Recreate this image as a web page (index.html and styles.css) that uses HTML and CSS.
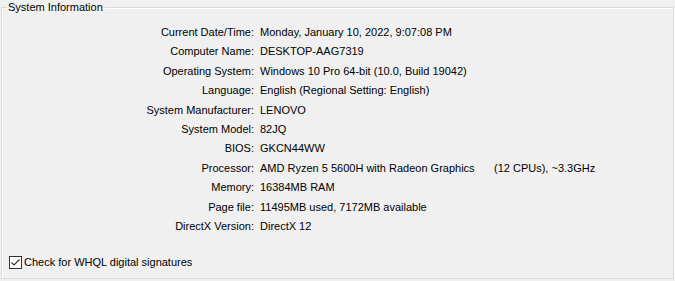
FILE: index.html
```html
<!DOCTYPE html>
<html lang="en">
<head>
  <meta charset="UTF-8">
  <title>System Information</title>
  <link rel="stylesheet" href="styles.css">
</head>
<body>
  <fieldset class="group">
    <legend>System Information</legend>
    <div class="info">
      <span class="label">Current Date/Time:</span><span class="value">Monday, January 10, 2022, 9:07:08 PM</span>
      <span class="label">Computer Name:</span><span class="value">DESKTOP-AAG7319</span>
      <span class="label">Operating System:</span><span class="value">Windows 10 Pro 64-bit (10.0, Build 19042)</span>
      <span class="label">Language:</span><span class="value">English (Regional Setting: English)</span>
      <span class="label">System Manufacturer:</span><span class="value">LENOVO</span>
      <span class="label">System Model:</span><span class="value">82JQ</span>
      <span class="label">BIOS:</span><span class="value">GKCN44WW</span>
      <span class="label">Processor:</span><span class="value"><span class="cpu-name">AMD Ryzen 5 5600H with Radeon Graphics</span>(12 CPUs), ~3.3GHz</span>
      <span class="label">Memory:</span><span class="value">16384MB RAM</span>
      <span class="label">Page file:</span><span class="value">11495MB used, 7172MB available</span>
      <span class="label">DirectX Version:</span><span class="value">DirectX 12</span>
    </div>

    <label class="check">
      <svg class="box" width="13" height="13" viewBox="0 0 13 13">
        <rect x="0.5" y="0.5" width="12" height="12" fill="#fff" stroke="#333"/>
        <path d="M2.5 6.5 L5 9 L10.5 3.5" fill="none" stroke="#333" stroke-width="1.2"/>
      </svg>
      Check for WHQL digital signatures
    </label>
  </fieldset>
</body>
</html>
```

FILE: styles.css
```css
body {
  margin: 0;
  background-color: #f0f0f0;
  font-family: "Liberation Sans", Arial, sans-serif;
  font-size: 11px;
  color: #000000;
}

.group {
  margin: 0 0 0 1px;
  padding: 0;
  width: 673px;
  height: 279px;
  box-sizing: border-box;
  border: 1px solid #dcdcdc;
  box-shadow: 1px 1px 0 #ffffff, inset 1px 1px 0 #ffffff;
}

.group legend {
  margin-left: 5px;
  padding: 1px 2px 0 1px;
  line-height: 13px;
}

.info {
  display: grid;
  grid-template-columns: 252px auto;
  column-gap: 6px;
  line-height: 19.4px;
  padding-top: 9px;
}

.label {
  text-align: right;
}

.cpu-name {
  display: inline-block;
  width: 234px;
}

.check {
  display: flex;
  align-items: center;
  gap: 2px;
  margin: 20px 0 0 7px;
  line-height: 13px;
}

.check .box {
  flex: none;
}
```
